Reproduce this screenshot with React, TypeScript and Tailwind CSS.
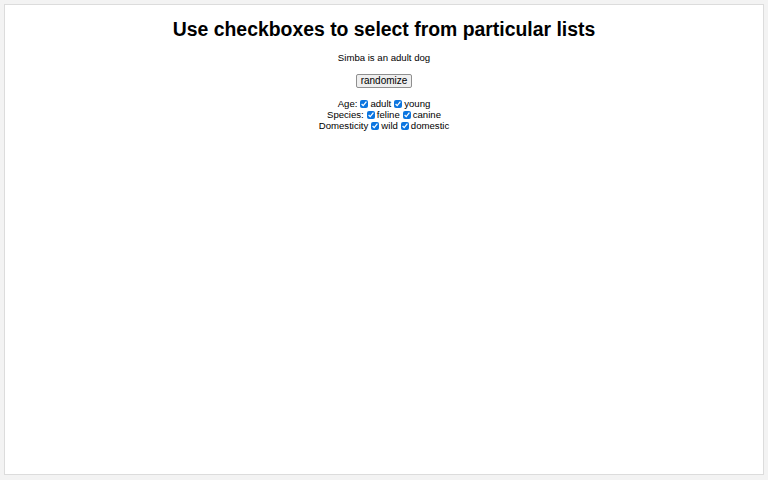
import { useState } from "react";

const names = ["Simba", "Nala", "Rex", "Tom"];

function Check({ label, checked, onChange }: { label: string; checked: boolean; onChange: () => void }) {
  return (
    <label className="inline-flex items-center">
      <input type="checkbox" checked={checked} onChange={onChange} className="ml-[3px] mr-[2px] h-[8px] w-[8px] accent-[#0b75e0]" />
      {label}
    </label>
  );
}

export default function App() {
  const [sel, setSel] = useState<Record<string, boolean>>({
    adult: true, young: true, feline: true, canine: true, wild: true, domestic: true,
  });
  const [name, setName] = useState(0);
  const toggle = (k: string) => setSel(s => ({ ...s, [k]: !s[k] }));

  return (
    <div className="min-h-screen bg-[#f3f3f3] p-[4px] pb-[5px] font-['Liberation_Sans',Arial,sans-serif] text-black">
      <div className="flex h-[471px] flex-col items-center border border-[#dcdcdc] bg-white text-[9.6px]">
        <h1 className="mt-[12px] text-[19.4px] font-bold leading-[24px]">Use checkboxes to select from particular lists</h1>
        <p className="mt-[11px] leading-[12px]">{names[name]} is an adult dog</p>
        <button
          onClick={() => setName(n => (n + 1) % names.length)}
          className="mt-[10px] rounded-[2px] border border-[#8f8f8f] bg-[#efefef] px-[4px] text-[10px] leading-[12px]"
        >
          randomize
        </button>
        <div className="mt-[10px] flex flex-col items-center leading-[11px]">
          <div className="flex items-center">
            Age:<Check label="adult" checked={sel.adult} onChange={() => toggle("adult")} />
            <Check label="young" checked={sel.young} onChange={() => toggle("young")} />
          </div>
          <div className="flex items-center">
            Species:<Check label="feline" checked={sel.feline} onChange={() => toggle("feline")} />
            <Check label="canine" checked={sel.canine} onChange={() => toggle("canine")} />
          </div>
          <div className="flex items-center">
            Domesticity<Check label="wild" checked={sel.wild} onChange={() => toggle("wild")} />
            <Check label="domestic" checked={sel.domestic} onChange={() => toggle("domestic")} />
          </div>
        </div>
      </div>
    </div>
  );
}
